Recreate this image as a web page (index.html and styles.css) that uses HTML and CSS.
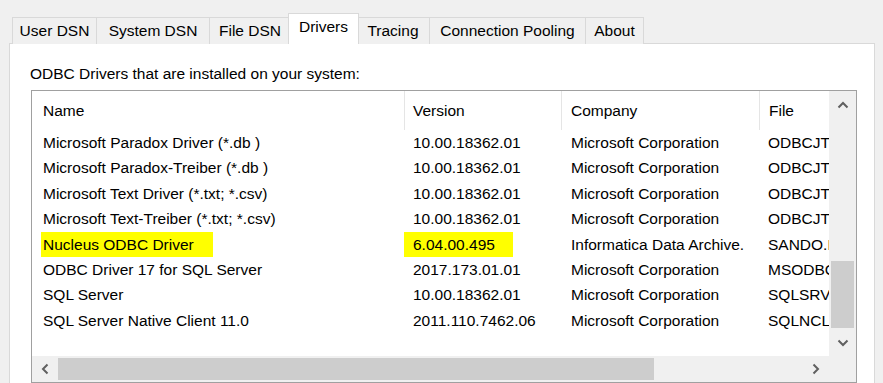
FILE: index.html
```html
<!DOCTYPE html>
<html>
<head>
<meta charset="utf-8">
<link rel="stylesheet" href="styles.css">
</head>
<body>
<div class="window">
  <div class="tabs">
    <div class="tab t-user">User DSN</div>
    <div class="tab t-system">System DSN</div>
    <div class="tab t-file">File DSN</div>
    <div class="tab active t-drivers">Drivers</div>
    <div class="tab t-tracing">Tracing</div>
    <div class="tab t-pool">Connection Pooling</div>
    <div class="tab t-about">About</div>
  </div>
  <div class="panel">
    <div class="caption">ODBC Drivers that are installed on your system:</div>
    <div class="listbox">
      <div class="list">
        <div class="row header">
          <div class="cell c-name">Name</div>
          <div class="cell c-ver">Version</div>
          <div class="cell c-comp">Company</div>
          <div class="cell c-file">File</div>
        </div>
        <div class="row">
          <div class="cell c-name">Microsoft Paradox Driver (*.db )</div>
          <div class="cell c-ver">10.00.18362.01</div>
          <div class="cell c-comp">Microsoft Corporation</div>
          <div class="cell c-file">ODBCJT32.DLL</div>
        </div>
        <div class="row">
          <div class="cell c-name">Microsoft Paradox-Treiber (*.db )</div>
          <div class="cell c-ver">10.00.18362.01</div>
          <div class="cell c-comp">Microsoft Corporation</div>
          <div class="cell c-file">ODBCJT32.DLL</div>
        </div>
        <div class="row">
          <div class="cell c-name">Microsoft Text Driver (*.txt; *.csv)</div>
          <div class="cell c-ver">10.00.18362.01</div>
          <div class="cell c-comp">Microsoft Corporation</div>
          <div class="cell c-file">ODBCJT32.DLL</div>
        </div>
        <div class="row">
          <div class="cell c-name">Microsoft Text-Treiber (*.txt; *.csv)</div>
          <div class="cell c-ver">10.00.18362.01</div>
          <div class="cell c-comp">Microsoft Corporation</div>
          <div class="cell c-file">ODBCJT32.DLL</div>
        </div>
        <div class="row">
          <div class="cell c-name"><span class="hl hl-name">Nucleus ODBC Driver</span></div>
          <div class="cell c-ver"><span class="hl hl-ver">6.04.00.495</span></div>
          <div class="cell c-comp">Informatica Data Archive.</div>
          <div class="cell c-file">SANDO.DLL</div>
        </div>
        <div class="row">
          <div class="cell c-name">ODBC Driver 17 for SQL Server</div>
          <div class="cell c-ver">2017.173.01.01</div>
          <div class="cell c-comp">Microsoft Corporation</div>
          <div class="cell c-file">MSODBCSQL17.DLL</div>
        </div>
        <div class="row">
          <div class="cell c-name">SQL Server</div>
          <div class="cell c-ver">10.00.18362.01</div>
          <div class="cell c-comp">Microsoft Corporation</div>
          <div class="cell c-file">SQLSRV32.DLL</div>
        </div>
        <div class="row">
          <div class="cell c-name">SQL Server Native Client 11.0</div>
          <div class="cell c-ver">2011.110.7462.06</div>
          <div class="cell c-comp">Microsoft Corporation</div>
          <div class="cell c-file">SQLNCLI11.DLL</div>
        </div>
      </div>
      <div class="vscroll">
        <div class="arrow-v">
          <svg width="12" height="8" viewBox="0 0 12 8"><polyline points="1.5,6.5 6,2 10.5,6.5" fill="none" stroke="#606060" stroke-width="2"/></svg>
        </div>
        <div class="vtrack"><div class="vthumb"></div></div>
        <div class="arrow-v">
          <svg width="12" height="8" viewBox="0 0 12 8"><polyline points="1.5,1.5 6,6 10.5,1.5" fill="none" stroke="#606060" stroke-width="2"/></svg>
        </div>
      </div>
      <div class="hscroll">
        <div class="arrow-h">
          <svg width="8" height="12" viewBox="0 0 8 12"><polyline points="6.5,1.5 2,6 6.5,10.5" fill="none" stroke="#606060" stroke-width="2"/></svg>
        </div>
        <div class="htrack"><div class="hthumb"></div></div>
        <div class="arrow-h">
          <svg width="8" height="12" viewBox="0 0 8 12"><polyline points="1.5,1.5 6,6 1.5,10.5" fill="none" stroke="#606060" stroke-width="2"/></svg>
        </div>
      </div>
      <div class="corner"></div>
    </div>
  </div>
</div>
</body>
</html>
```
FILE: styles.css
```css
html, body {
  margin: 0;
  padding: 0;
  background: #f0f0f0;
  overflow: hidden;
}
body {
  font-family: "Liberation Sans", Arial, sans-serif;
  font-size: 15.5px;
  color: #000;
}
.window {
  padding: 13px 0 0 9px;
  width: 866px;
}
.tabs {
  display: flex;
  align-items: flex-end;
  height: 31px;
  margin-bottom: -1px;
  padding-left: 3px;
  position: relative;
  z-index: 2;
}
.tab {
  height: 27px;
  box-sizing: border-box;
  border: 1px solid #d9d9d9;
  border-bottom: none;
  border-right: none;
  background: #f0f0f0;
  display: flex;
  align-items: center;
  justify-content: center;
  white-space: nowrap;
  font-size: 15.5px;
  padding-bottom: 1px;
}
.t-about { border-right: 1px solid #d9d9d9; }
.t-user { width: 84px; }
.t-system { width: 113px; }
.t-file { width: 81px; }
.tab.active {
  width: 71px;
  height: 31px;
  margin: 0 -2px;
  background: #fff;
  border-right: 1px solid #d9d9d9;
  padding-bottom: 5px;
  position: relative;
  z-index: 1;
}
.t-tracing { width: 72px; border-left: none; }
.t-pool { width: 156px; }
.t-about { width: 59px; }
.panel {
  background: #fff;
  border: 1px solid #d9d9d9;
  border-bottom: none;
  height: 340px;
  padding: 21px 17px 0 21px;
  box-sizing: border-box;
  width: 866px;
}
.caption {
  margin-left: -1px;
  height: 25px;
  line-height: 18px;
}
.listbox {
  border: 1px solid #a0a0a0;
  display: grid;
  grid-template-columns: 1fr 27px;
  grid-template-rows: 265px 26px;
  width: 826px;
  box-sizing: border-box;
}
.list {
  overflow: hidden;
  background: #fff;
}
.row {
  display: flex;
  height: 25.4px;
  line-height: 25.4px;
  white-space: nowrap;
}
.row.header {
  height: 39px;
  line-height: 39px;
}
.cell {
  flex: none;
  box-sizing: border-box;
  overflow: hidden;
}
.c-name { width: 372px; padding-left: 11px; }
.c-ver { width: 157px; padding-left: 9px; }
.c-comp { width: 198px; padding-left: 10px; }
.c-file { width: 120px; padding-left: 9px; }
.header .cell {
  border-right: 1px solid #e5e5e5;
  line-height: 39px;
}
.header .c-name { width: 373px; }
.header .c-ver { width: 157px; padding-left: 8px; }
.header .c-comp { width: 198px; padding-left: 9px; }
.header .c-file { border-right: none; }
.hl {
  display: inline-block;
  background: #ffff00;
  box-sizing: border-box;
  height: 25.4px;
}
.hl-name {
  width: 172px;
  margin-left: -2px;
  padding-left: 2px;
}
.hl-ver {
  width: 109px;
  margin-left: -9px;
  padding-left: 9px;
}
.vscroll {
  background: #f0f0f0;
  display: flex;
  flex-direction: column;
}
.arrow-v {
  height: 27px;
  display: flex;
  align-items: center;
  justify-content: center;
  flex: none;
}
.vtrack {
  flex: 1;
  display: flex;
  flex-direction: column;
  justify-content: flex-end;
  padding: 0 2px 1px 2px;
}
.vthumb {
  height: 67px;
  background: #cdcdcd;
}
.hscroll {
  background: #f0f0f0;
  display: flex;
  align-items: stretch;
}
.arrow-h {
  width: 26px;
  display: flex;
  align-items: center;
  justify-content: center;
  flex: none;
}
.htrack {
  flex: 1;
  padding: 2px 0;
  display: flex;
}
.hthumb {
  width: 596px;
  background: #cdcdcd;
}
.corner {
  background: #f0f0f0;
}
```
